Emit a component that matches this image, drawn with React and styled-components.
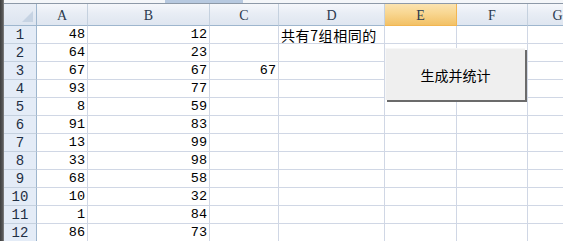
import React from "react";
import styled, { createGlobalStyle } from "styled-components";

const Global = createGlobalStyle`
  html, body { margin: 0; padding: 0; background: #ffffff; overflow: hidden; }
  body { width: 563px; height: 241px; }
`;

const COLS = [
  { key: "A", w: 51 },
  { key: "B", w: 122 },
  { key: "C", w: 69 },
  { key: "D", w: 106 },
  { key: "E", w: 72, selected: true },
  { key: "F", w: 71 },
  { key: "G", w: 60 },
];

const A = [48, 64, 67, 93, 8, 91, 13, 33, 68, 10, 1, 86];
const B = [12, 23, 67, 77, 59, 83, 99, 98, 58, 32, 84, 73];

const Window = styled.div`
  display: flex;
  width: 563px;
  height: 241px;
  overflow: hidden;
`;

const LeftFrame = styled.div`
  flex: 0 0 4px;
  background: linear-gradient(to right, #3f3f3f, #5a5a5a 70%, #8a8a8a);
`;

const Main = styled.div`
  flex: 1;
  display: flex;
  flex-direction: column;
  position: relative;
  overflow: hidden;
`;

const TopStrip = styled.div`
  height: 3px;
  flex: 0 0 3px;
  background: #f4f6f9;
  border-bottom: 1px solid #8d99a8;
  position: relative;
`;

const Tab = styled.div`
  position: absolute;
  left: 161px;
  top: 0;
  width: 78px;
  height: 3px;
  background: #b7c9e0;
`;

const Sheet = styled.div`
  display: grid;
  grid-template-columns: 33px ${COLS.map((c) => c.w + "px").join(" ")};
  grid-template-rows: 22px repeat(12, 18px);
`;

const Corner = styled.div`
  box-sizing: border-box;
  background: linear-gradient(#e9eef6, #dde5f0);
  border-right: 1px solid #9eb6ce;
  border-bottom: 1px solid #9eb6ce;
  position: relative;
  &::after {
    content: "";
    position: absolute;
    right: 3px;
    bottom: 3px;
    width: 0;
    height: 0;
    border-left: 11px solid transparent;
    border-bottom: 11px solid #c6d3e3;
  }
`;

const ColHead = styled.div`
  box-sizing: border-box;
  display: flex;
  align-items: center;
  justify-content: center;
  font-family: "Liberation Serif", "DejaVu Serif", serif;
  font-size: 14px;
  color: #2b3a4e;
  background: ${(p) =>
    p.$selected
      ? "linear-gradient(#fbe3b0, #f8d690 45%, #f2c166)"
      : "linear-gradient(#f5f7fb, #e8edf5 45%, #dfe6f0)"};
  border-right: 1px solid ${(p) => (p.$selected ? "#f2b652" : "#c5d1df")};
  border-bottom: 1px solid ${(p) => (p.$selected ? "#f2b652" : "#9eb6ce")};
  padding-top: 2px;
`;

const RowHead = styled.div`
  box-sizing: border-box;
  display: flex;
  align-items: center;
  justify-content: center;
  font-family: "Liberation Mono", "DejaVu Sans Mono", monospace;
  font-size: 14px;
  color: #1f2f44;
  background: #e4ecf7;
  border-right: 1px solid #9eb6ce;
  border-bottom: 1px solid #c5d1df;
`;

const Cell = styled.div`
  box-sizing: border-box;
  display: flex;
  align-items: center;
  justify-content: ${(p) => (p.$left ? "flex-start" : "flex-end")};
  padding: 0 2px;
  border-right: 1px solid #d0d7e5;
  border-bottom: 1px solid #d0d7e5;
  font-family: "Liberation Mono", "Noto Sans CJK SC", monospace;
  font-size: 13.5px;
  color: #000;
  white-space: nowrap;
  overflow: visible;
`;

const CjkText = styled.span`
  font-family: "Noto Sans CJK SC", sans-serif;
  font-size: 14px;
  letter-spacing: 0.6px;
  line-height: 1;
  position: relative;
  z-index: 1;
`;

const Button = styled.button`
  position: absolute;
  left: 381px;
  top: 48px;
  width: 140px;
  height: 52px;
  box-sizing: border-box;
  background: #efefef;
  border: none;
  border-top: 1px solid #f7f7f7;
  border-left: 1px solid #f7f7f7;
  box-shadow: 2px 2px 0 #6b6b6b;
  font-family: "Noto Sans CJK SC", sans-serif;
  font-size: 14px;
  color: #000;
  padding: 0;
  cursor: default;
`;

export default function App() {
  const cells = [];
  for (let r = 0; r < 12; r++) {
    cells.push(<RowHead key={`rh${r}`}>{r + 1}</RowHead>);
    COLS.forEach((c) => {
      let content = null;
      let left = false;
      if (c.key === "A") content = A[r];
      if (c.key === "B") content = B[r];
      if (c.key === "C" && r === 2) content = 67;
      if (c.key === "D" && r === 0) {
        content = <CjkText>共有7组相同的</CjkText>;
        left = true;
      }
      cells.push(
        <Cell key={`${c.key}${r}`} $left={left}>
          {content}
        </Cell>
      );
    });
  }
  return (
    <Window>
      <Global />
      <LeftFrame />
      <Main>
        <TopStrip>
          <Tab />
        </TopStrip>
        <Sheet>
          <Corner />
          {COLS.map((c) => (
            <ColHead key={c.key} $selected={c.selected}>
              {c.key}
            </ColHead>
          ))}
          {cells}
        </Sheet>
        <Button>生成并统计</Button>
      </Main>
    </Window>
  );
}
